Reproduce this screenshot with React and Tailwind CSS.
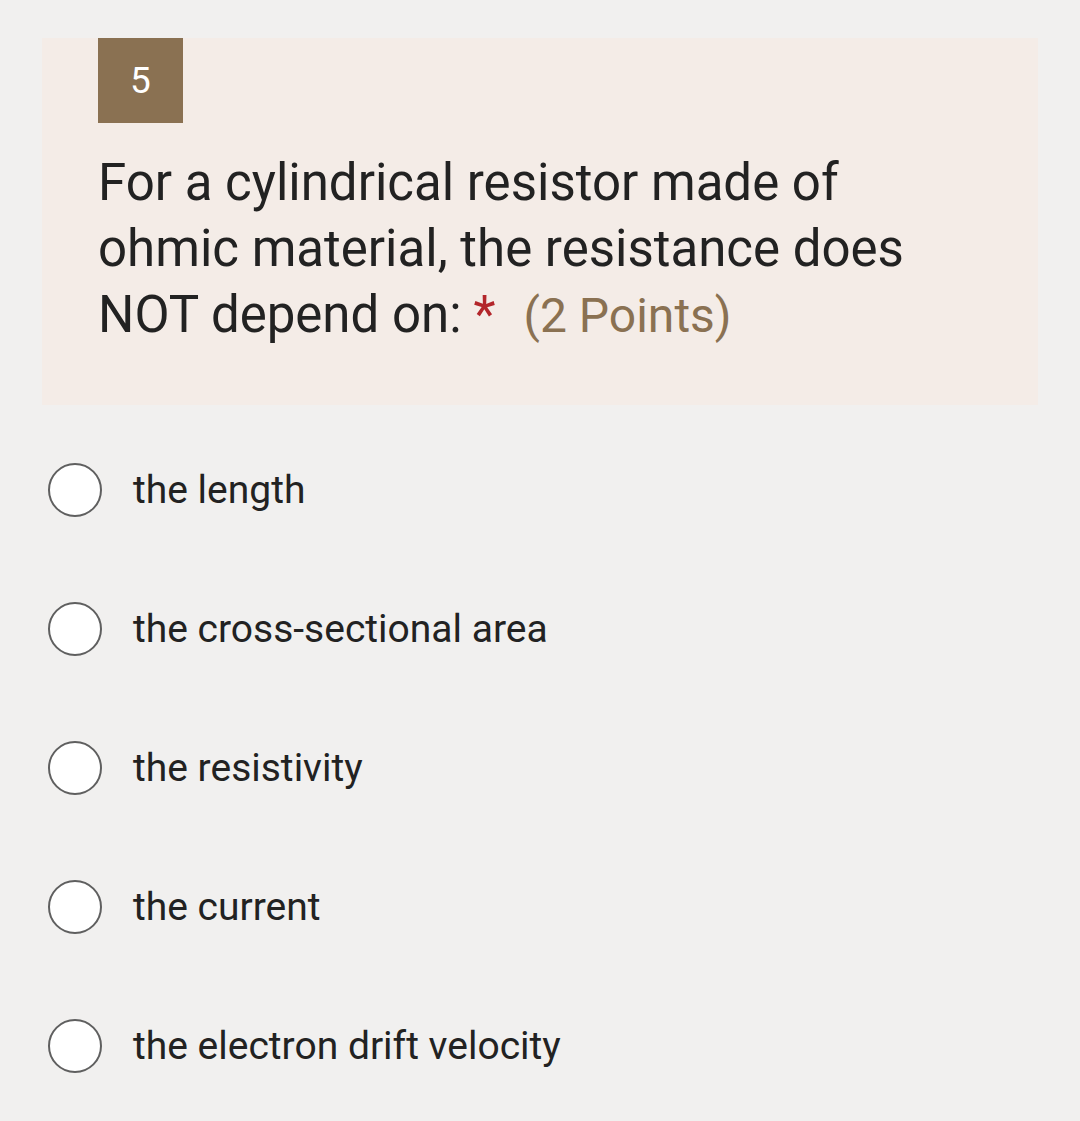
import React from 'react';

const options = [
  'the length',
  'the cross-sectional area',
  'the resistivity',
  'the current',
  'the electron drift velocity',
];

export default function App() {
  return (
    <div
      className="w-[1080px] h-[1121px] bg-[#f1f0ef] overflow-hidden"
      style={{ fontFamily: 'Roboto, "Noto Sans", sans-serif' }}
    >
      {/* Question card */}
      <div className="ml-[42px] mt-[38px] w-[996px] h-[367px] bg-[#f4ece7] pl-[56px] pr-[40px]">
        <div className="w-[85px] h-[85px] bg-[#8a7152] flex items-center justify-center text-white text-[37px]">
          5
        </div>
        <div className="mt-[27px] w-[840px] text-[51px] leading-[66px] text-[#222222]">
          For a cylindrical resistor made of ohmic material, the resistance does NOT depend on:
          <span className="text-[#b3262b] ml-[12px]">*</span>
          <span className="text-[#8a7152] text-[48px] ml-[28px]">(2 Points)</span>
        </div>
      </div>

      {/* Options */}
      <div className="mt-[58px] flex flex-col gap-[85px] pl-[48px]">
        {options.map((opt) => (
          <div key={opt} className="flex items-center h-[54px]">
            <div className="w-[54px] h-[54px] rounded-full border-[2.5px] border-[#5f5f5f] bg-white shrink-0" />
            <span className="ml-[31px] text-[39px] text-[#222222]">{opt}</span>
          </div>
        ))}
      </div>
    </div>
  );
}
